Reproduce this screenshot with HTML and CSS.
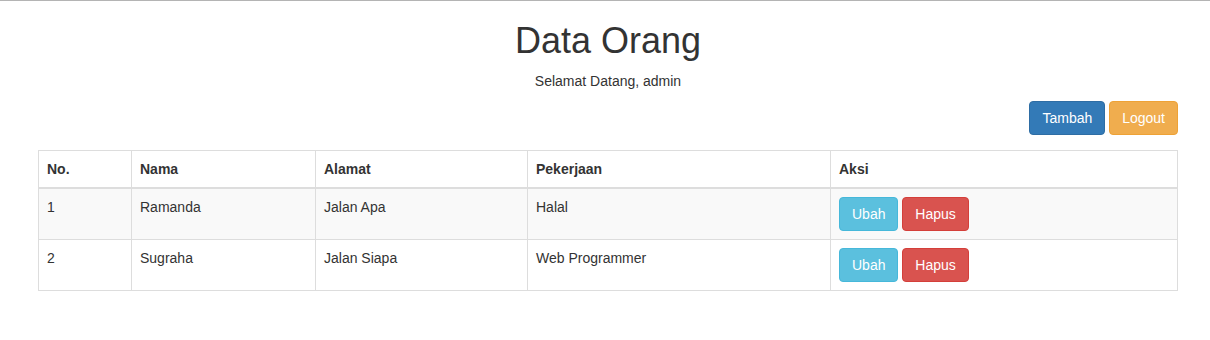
FILE: index.html
```html
<!DOCTYPE html>
<html>
  <head>
    <meta charset="UTF-8" />
    <title>Data Orang</title>
    <link rel="stylesheet" href="styles.css">
  </head>
  <body>
    <div class="container">
      <h1 class="text-center">Data Orang</h1>
      <p class="text-center">Selamat Datang, admin</p>

      <div class="toolbar">
        <a href="#" class="btn btn-primary">Tambah</a>
        <a href="#" class="btn btn-warning">Logout</a>
      </div>

      <table class="table table-bordered table-striped">
        <thead>
          <tr>
            <th class="col-no">No.</th>
            <th class="col-nama">Nama</th>
            <th class="col-alamat">Alamat</th>
            <th class="col-kerja">Pekerjaan</th>
            <th>Aksi</th>
          </tr>
        </thead>
        <tbody>
          <tr>
            <td>1</td>
            <td>Ramanda</td>
            <td>Jalan Apa</td>
            <td>Halal</td>
            <td>
              <a href="#" class="btn btn-info">Ubah</a>
              <a href="#" class="btn btn-danger">Hapus</a>
            </td>
          </tr>
          <tr>
            <td>2</td>
            <td>Sugraha</td>
            <td>Jalan Siapa</td>
            <td>Web Programmer</td>
            <td>
              <a href="#" class="btn btn-info">Ubah</a>
              <a href="#" class="btn btn-danger">Hapus</a>
            </td>
          </tr>
        </tbody>
      </table>
    </div>
  </body>
</html>
```

FILE: styles.css
```css
/* Base */
html {
  border-top: 1px solid #b4b4b4;
}
body {
  margin: 0;
  font-family: "Liberation Sans", Arial, Helvetica, sans-serif;
  font-size: 14px;
  line-height: 1.42857143;
  color: #333;
  background-color: #fff;
}
.container {
  width: 1140px;
  padding: 0 15px;
  margin-left: 23px;
}
.text-center {
  text-align: center;
}
h1 {
  font-size: 36px;
  font-weight: 500;
  line-height: 1.1;
  margin: 20px 0 10px;
}
p {
  margin: 0 0 10px;
}

/* Buttons */
.toolbar {
  text-align: right;
  margin-bottom: 15px;
}
.btn {
  display: inline-block;
  padding: 6px 12px;
  font-size: 14px;
  line-height: 1.42857143;
  text-align: center;
  white-space: nowrap;
  vertical-align: middle;
  border: 1px solid transparent;
  border-radius: 4px;
  color: #fff;
  text-decoration: none;
}
.btn-primary {
  background-color: #337ab7;
  border-color: #2e6da4;
}
.btn-warning {
  background-color: #f0ad4e;
  border-color: #eea236;
}
.btn-info {
  background-color: #5bc0de;
  border-color: #46b8da;
}
.btn-danger {
  background-color: #d9534f;
  border-color: #d43f3a;
}

/* Table */
.table {
  width: 100%;
  border-collapse: collapse;
  border-spacing: 0;
  margin-bottom: 20px;
}
.table th,
.table td {
  padding: 8px;
  line-height: 1.42857143;
  vertical-align: top;
  text-align: left;
  border: 1px solid #ddd;
}
.table thead th {
  vertical-align: bottom;
  border-bottom: 2px solid #ddd;
  font-weight: bold;
}
.table-striped tbody tr:nth-of-type(odd) {
  background-color: #f9f9f9;
}
.col-no {
  width: 76px;
}
.col-nama {
  width: 167px;
}
.col-alamat {
  width: 195px;
}
.col-kerja {
  width: 286px;
}
```
